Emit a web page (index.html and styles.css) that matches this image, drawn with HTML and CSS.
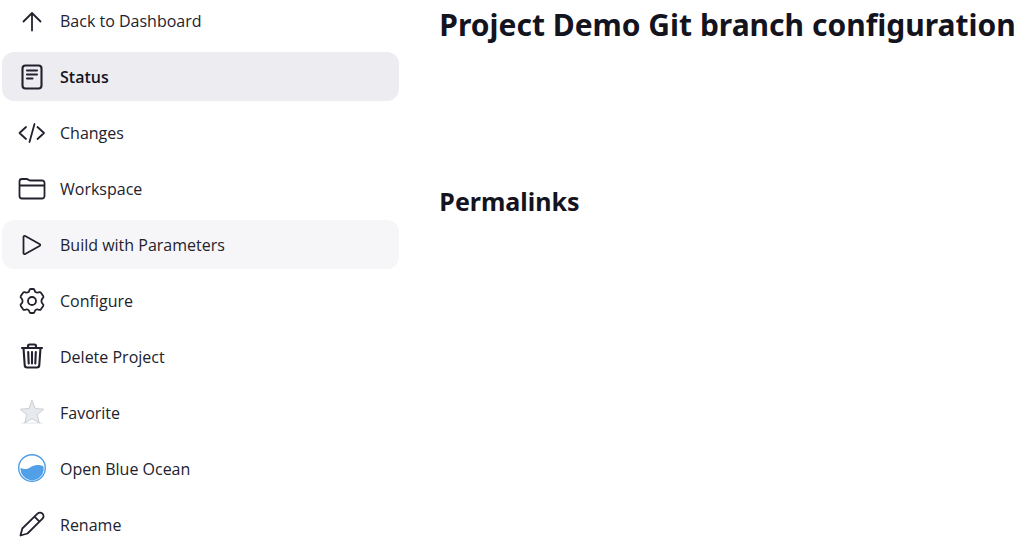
FILE: index.html
```
<!DOCTYPE html>
<html lang="en">
<head>
    <meta charset="UTF-8">
    <meta name="viewport" content="width=device-width, initial-scale=1.0">
    <title>Demo Git branch configuration</title>
    <link rel="stylesheet" href="styles.css">
</head>
<body>
    <div class="page">
        <nav class="tasks">
            <a class="task" href="#">
                <svg class="icon" viewBox="0 0 32 32"><path d="M16 25.500V8M7.500 16.500L16 8l8.500 8.500"/></svg>
                Back to Dashboard
            </a>
            <a class="task task-active" href="#">
                <svg class="icon icon-bold" viewBox="0 0 32 32"><rect x="6.500" y="4.500" width="19" height="23" rx="3"/><path d="M11 9.500h10M11 13.500h10M11 17.500h5.500"/></svg>
                Status
            </a>
            <a class="task" href="#">
                <svg class="icon" viewBox="0 0 32 32"><path d="M10 10l-6.500 6 6.500 6M21.500 10l6.500 6-6.500 6M18.500 7l-5 18"/></svg>
                Changes
            </a>
            <a class="task" href="#">
                <svg class="icon" viewBox="0 0 32 32"><path d="M3.500 23V8.500a2.500 2.500 0 0 1 2.500-2.500h4.500c2 0 2 1.500 4 1.500H26a2.500 2.500 0 0 1 2.500 2.500v13a2.500 2.500 0 0 1-2.500 2.500H6A2.500 2.500 0 0 1 3.500 23zM3.500 12.500h25"/></svg>
                Workspace
            </a>
            <a class="task task-hover" href="#">
                <svg class="icon" viewBox="0 0 32 32"><path d="M7.500 8v16c0 1 .8 1.500 1.700 1l14.300-8c1-.6 1-1.400 0-2L9.200 7c-.9-.5-1.700 0-1.700 1z"/></svg>
                Build with Parameters
            </a>
            <a class="task" href="#">
                <svg class="icon" viewBox="0 0 32 32"><path d="M13.400 5.200c.2-.8.700-1.200 1.400-1.200h2.400c.7 0 1.200.4 1.400 1.200.4 2 1.900 2.900 3.800 2.200 1.200-.4 1.900-.4 2.500.3l2.300 3.300c.5.800.3 1.500-.5 2.200-1.700 1.500-1.700 4.100 0 5.600.8.700 1 1.400.5 2.200l-2.300 3.300c-.6.700-1.300.7-2.500.3-1.900-.7-3.400.2-3.800 2.200-.2.800-.7 1.200-1.400 1.200h-2.400c-.7 0-1.200-.4-1.400-1.200-.4-2-1.900-2.900-3.800-2.200-1.200.4-1.900.4-2.500-.3L4.800 21c-.5-.8-.3-1.500.5-2.200 1.700-1.500 1.700-4.100 0-5.600-.8-.7-1-1.400-.5-2.200l2.300-3.300c.6-.7 1.300-.7 2.500-.3 1.900.7 3.400-.2 3.800-2.200z"/><circle cx="16" cy="16" r="4"/></svg>
                Configure
            </a>
            <a class="task" href="#">
                <svg class="icon icon-bold" viewBox="0 0 32 32"><path d="M6 7h20M12 7V5a1.500 1.500 0 0 1 1.500-1.500h5A1.500 1.500 0 0 1 20 5v2M7.500 7l1.200 17a2.500 2.500 0 0 0 2.500 2.500h9.600a2.500 2.500 0 0 0 2.500-2.500l1.200-17M12.200 11l.5 11.500M16 11v11.500M19.800 11l-.5 11.500"/></svg>
                Delete Project
            </a>
            <a class="task" href="#">
                <svg class="icon" viewBox="0 0 32 32"><path class="star-shadow" d="M6 25.500h20l1 1H5z"/><path class="star" d="M16 3.500l3.300 8 8.500.7-6.500 5.500 2 8.300-7.300-4.400L8.700 26l2-8.300-6.500-5.500 8.500-.7z"/></svg>
                Favorite
            </a>
            <a class="task" href="#">
                <svg class="icon" viewBox="0 0 32 32"><circle class="ocean-ring" cx="16" cy="15" r="13.300"/><path class="ocean-wave" d="M4.500 15c3.500 1.300 6.500 1.500 9.500-.5 3.500-2.500 8.500-3.500 13.500-1a11.600 11.600 0 1 1-23 1.500z"/></svg>
                Open Blue Ocean
            </a>
            <a class="task" href="#">
                <svg class="icon" viewBox="0 0 32 32"><path d="M4.500 26.500l1.800-7L21.500 4.700a3.400 3.400 0 0 1 5 5L11.500 24.500zM18.500 7.700l5 5"/></svg>
                Rename
            </a>
        </nav>
        <main class="content">
            <h1>Project Demo Git branch configuration</h1>
            <h2>Permalinks</h2>
        </main>
    </div>
</body>
</html>
```

FILE: styles.css
```
* {
    box-sizing: border-box;
}

body {
    margin: 0;
    background-color: #ffffff;
    color: #14141f;
    font-family: "Segoe UI", "Open Sans", "Noto Sans", sans-serif;
    overflow: hidden;
}

.page {
    display: grid;
    grid-template-columns: 39% 1fr;
    gap: 40px;
}

.tasks {
    display: flex;
    flex-direction: column;
    gap: 7px;
    margin-top: -4px;
    padding-left: 2px;
}

.task {
    display: flex;
    align-items: center;
    gap: 12px;
    height: 49px;
    padding: 0 14px;
    border-radius: 12px;
    color: #22222e;
    font-size: 16px;
    line-height: 24px;
    text-decoration: none;
}

.task:hover,
.task-hover {
    background-color: #f6f6f8;
}

.task-active {
    background-color: #edecf1;
    color: #14141f;
    font-weight: 600;
}

.icon {
    flex: none;
    width: 32px;
    height: 32px;
    fill: none;
    stroke: #22222e;
    stroke-width: 1.8;
    stroke-linecap: round;
    stroke-linejoin: round;
}

.icon-bold {
    stroke-width: 2.1;
}

.icon .star {
    fill: #e6e9ed;
    stroke: #c3c5c8;
    stroke-width: 0.8;
}

.icon .star-shadow {
    fill: #e4e4e4;
    stroke: none;
}

.icon .ocean-ring {
    stroke: #519fe6;
    stroke-width: 1.4;
}

.icon .ocean-wave {
    fill: #519fe6;
    stroke: none;
}

h1,
h2 {
    margin: 0;
    font-family: "Segoe UI", "Noto Sans", "Open Sans", sans-serif;
    font-weight: 700;
    white-space: nowrap;
}

h1 {
    padding-top: 5px;
    font-size: 30px;
    line-height: 40px;
}

h2 {
    margin-top: 138px;
    font-size: 25px;
    line-height: 36px;
}
```
